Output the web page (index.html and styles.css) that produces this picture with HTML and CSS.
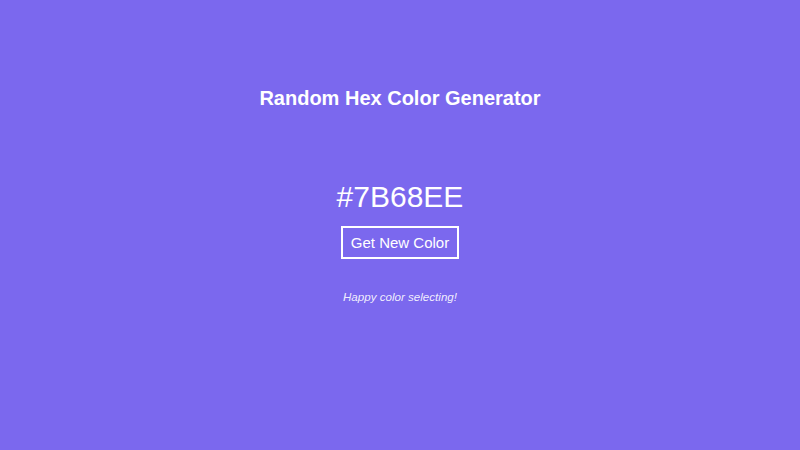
FILE: index.html
```html
<!DOCTYPE html>
<html>
<head>
    <title>Random Hex Color Generator</title>
    <meta name="viewport" content="width=device-width, initial-scale=1.0">
    <link rel="stylesheet" href="styles.css">
</head>
<body>
    <div class="page">
        <h1>Random Hex Color Generator</h1>

        <div class="color-box">
            <div id="hexCode" class="hex-code">#7B68EE</div>
            <button onclick="newColor()">Get New Color</button>
            <p class="tagline">Happy color selecting!</p>
        </div>
    </div>

    <script>
        function newColor() {
            // Pick a random 24-bit value and pad it to six hex digits
            const hex = "#" + Math.floor(Math.random() * 0x1000000)
                .toString(16)
                .padStart(6, "0")
                .toUpperCase();

            document.body.style.backgroundColor = hex;
            document.getElementById("hexCode").textContent = hex;
        }
    </script>
</body>
</html>
```

FILE: styles.css
```css
body {
    margin: 0;
    min-height: 100vh;
    font-family: "Liberation Sans", Arial, sans-serif;
    background-color: #7b68ee;
    color: #fff;
    text-align: center;
}

.page {
    padding-top: 86px;
}

h1 {
    margin: 0;
    font-size: 20px;
    font-weight: 700;
    line-height: 24px;
}

.color-box {
    margin-top: 69px;
    display: flex;
    flex-direction: column;
    align-items: center;
}

.hex-code {
    font-size: 30px;
    line-height: 36px;
}

button {
    margin-top: 11px;
    padding: 6px 8px;
    background: transparent;
    color: #fff;
    border: 2px solid #fff;
    font-family: inherit;
    font-size: 15px;
    line-height: 17px;
    cursor: pointer;
}

.tagline {
    margin: 31px 0 0;
    font-size: 11.6px;
    line-height: 14px;
    font-style: italic;
    color: rgba(255, 255, 255, 0.9);
}
```
